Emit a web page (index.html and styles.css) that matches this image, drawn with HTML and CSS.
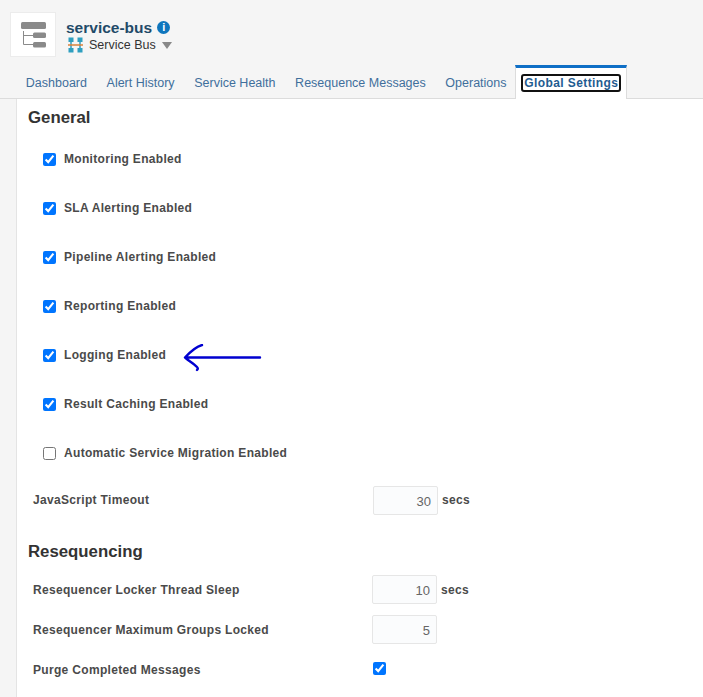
FILE: index.html
```html
<!DOCTYPE html>
<html lang="en">

<head>
  <meta charset="UTF-8" />
  <title>service-bus Global Settings</title>
  <link rel="stylesheet" href="styles.css">
</head>

<body>
  <div class="header">
    <div class="logoBox">
      <svg class="logoIcon" width="26" height="26" viewBox="0 0 26 26">
        <rect x="0" y="0" width="25" height="7" rx="1.5" fill="#8a8a8a" />
        <rect x="12" y="10.5" width="13" height="5.5" rx="1.5" fill="#8a8a8a" />
        <rect x="12" y="20" width="13" height="5.5" rx="1.5" fill="#8a8a8a" />
        <path d="M2.5 9V22.5H12M2.5 13.5H12" fill="none" stroke="#8a8a8a" stroke-width="1" />
      </svg>
    </div>
    <div class="titleBlock">
      <div class="titleRow">
        <span class="title">service-bus</span>
        <span class="infoIcon">i</span>
      </div>
      <div class="typeRow">
        <svg width="16" height="16" viewBox="0 0 16 16">
          <path d="M3 3V13M12 3V13" fill="none" stroke="#2f9fc0" stroke-width="1.5" />
          <rect x="0.5" y="0.5" width="5" height="4.5" fill="#2f9fc0" />
          <rect x="9.5" y="0.5" width="5" height="4.5" fill="#2f9fc0" />
          <rect x="0.5" y="11" width="5" height="4.5" fill="#2f9fc0" />
          <rect x="9.5" y="11" width="5" height="4.5" fill="#2f9fc0" />
          <path d="M0 8H15" stroke="#d9823b" stroke-width="1.5" />
        </svg>
        <span>Service Bus</span>
        <span class="caret"></span>
      </div>
    </div>
  </div>

  <div class="tabs">
    <a class="tab">Dashboard</a>
    <a class="tab">Alert History</a>
    <a class="tab">Service Health</a>
    <a class="tab">Resequence Messages</a>
    <a class="tab">Operations</a>
    <a class="tab activeTab"><span class="focusRing">Global Settings</span></a>
  </div>

  <div class="panel">
    <h2>General</h2>
    <div class="checkList">
      <label class="checkRow"><input type="checkbox" checked />Monitoring Enabled</label>
      <label class="checkRow"><input type="checkbox" checked />SLA Alerting Enabled</label>
      <label class="checkRow"><input type="checkbox" checked />Pipeline Alerting Enabled</label>
      <label class="checkRow"><input type="checkbox" checked />Reporting Enabled</label>
      <label class="checkRow"><input type="checkbox" checked />Logging Enabled</label>
      <label class="checkRow"><input type="checkbox" checked />Result Caching Enabled</label>
      <label class="checkRow"><input type="checkbox" />Automatic Service Migration Enabled</label>
    </div>
    <div class="fieldRow timeoutRow">
      <span class="fieldLabel">JavaScript Timeout</span>
      <span class="numBox">30</span>
      <span class="unit">secs</span>
    </div>

    <h2 class="resequencing">Resequencing</h2>
    <div class="fieldRow shifted firstShifted">
      <span class="fieldLabel">Resequencer Locker Thread Sleep</span>
      <span class="numBox">10</span>
      <span class="unit">secs</span>
    </div>
    <div class="fieldRow shifted">
      <span class="fieldLabel">Resequencer Maximum Groups Locked</span>
      <span class="numBox">5</span>
    </div>
    <div class="fieldRow purgeRow">
      <span class="fieldLabel">Purge Completed Messages</span>
      <input type="checkbox" checked />
    </div>
  </div>

  <!-- hand drawn annotation on top of the screenshot -->
  <svg class="arrow" width="84" height="32" viewBox="0 0 84 32">
    <path d="M77 13.5H2C7 8 12 3 19 1M2 13.5C6 17 11 20 14 23 15 24 15 25 14 26" fill="none" stroke="#0000d0" stroke-width="2.4" stroke-linecap="round" stroke-linejoin="round" />
  </svg>
</body>

</html>
```

FILE: styles.css
```css
* {
  box-sizing: border-box;
}

html,
body {
  height: 697px;
  overflow: hidden;
}

body {
  position: relative;
  margin: 0;
  background-color: #f5f5f5;
  font-family: "Liberation Sans", Arial, sans-serif;
  font-size: 12px;
  color: #4a4a4a;
}

input[type="checkbox"] {
  width: 13px;
  height: 13px;
  margin: 0;
  accent-color: #0075ff;
  flex: none;
}

.header {
  display: flex;
  align-items: flex-start;
  height: 65px;
  padding: 12px 0 0 10px;
}

.logoBox {
  display: flex;
  align-items: center;
  justify-content: center;
  width: 46px;
  height: 45px;
  background-color: #fff;
  border: 1px solid #ececec;
}

.logoIcon {
  margin-left: 2px;
}

.titleBlock {
  margin-left: 10px;
  padding-top: 7px;
}

.titleRow {
  display: flex;
  align-items: center;
  gap: 5px;
  height: 17px;
}

.title {
  font-size: 15.5px;
  font-weight: bold;
  color: #1f4a68;
}

.infoIcon {
  width: 13px;
  height: 13px;
  border-radius: 50%;
  background-color: #0f76bd;
  color: #fff;
  font-size: 11px;
  font-weight: bold;
  line-height: 13px;
  text-align: center;
}

.typeRow {
  display: flex;
  align-items: center;
  height: 17px;
  margin-left: 2px;
  font-size: 12.5px;
  color: #333;
}

.typeRow span:first-of-type {
  margin-left: 5px;
}

.caret {
  width: 0;
  height: 0;
  margin: 2px 0 0 6px;
  border-left: 5px solid transparent;
  border-right: 5px solid transparent;
  border-top: 7px solid #888;
}

.tabs {
  display: flex;
  align-items: stretch;
  height: 34px;
  padding-left: 16px;
  border-bottom: 1px solid #dcdcdc;
}

.tab {
  display: flex;
  align-items: center;
  padding: 3px 9.8px 0;
  font-size: 12.5px;
  color: #3f6f9c;
}

.activeTab {
  position: relative;
  height: 34px;
  margin-left: -1px;
  padding: 0 6px 1px;
  background-color: #fff;
  border: 1px solid #dcdcdc;
  border-top: 3px solid #0f6fc6;
  border-bottom: none;
  font-size: 12px;
  font-weight: bold;
  letter-spacing: 0.4px;
  color: #1f5c91;
}

.focusRing {
  margin: 0 -1px;
  padding: 0 1px;
  border: 2px solid #111;
  border-radius: 3px;
}

.panel {
  height: 599px;
  margin-left: 16px;
  padding: 9px 0 0 11px;
  background-color: #fff;
  border-left: 1px solid #e4e4e4;
}

h2 {
  margin: 0;
  height: 20px;
  font-size: 16.8px;
  line-height: 20px;
  font-weight: bold;
  color: #333;
}

.checkList {
  margin-top: 7px;
  padding-left: 15px;
}

.checkRow {
  display: flex;
  align-items: center;
  gap: 8px;
  height: 49px;
  padding-bottom: 2px;
  font-weight: bold;
  letter-spacing: 0.32px;
}

.checkRow input {
  margin-top: 2px;
}

.fieldRow {
  display: flex;
  align-items: center;
  padding-left: 5px;
  font-weight: bold;
  letter-spacing: 0.32px;
}

.fieldLabel {
  width: 340px;
  flex: none;
}

.shifted .fieldLabel,
.purgeRow .fieldLabel {
  width: 339px;
}

.numBox {
  width: 65px;
  height: 29px;
  padding: 7px 6px 0 0;
  background-color: #fbfcfd;
  border: 1px solid #e6e6e6;
  border-radius: 2px;
  text-align: right;
  font-size: 13px;
  font-weight: normal;
  letter-spacing: 0;
  color: #666;
}

.unit {
  margin-left: 4px;
}

.timeoutRow {
  margin-top: 8px;
}

.timeoutRow .fieldLabel,
.timeoutRow .unit {
  margin-bottom: 2px;
}

.resequencing {
  margin-top: 26.5px;
}

.shifted {
  margin-top: 11px;
}

.firstShifted {
  margin-top: 13.5px;
}

.purgeRow {
  margin-top: 10px;
  height: 30px;
}

.purgeRow .fieldLabel {
  margin-top: 2px;
}

.purgeRow input {
  margin-left: 1px;
  margin-bottom: 2px;
}

.arrow {
  position: absolute;
  left: 183px;
  top: 344px;
}
```
